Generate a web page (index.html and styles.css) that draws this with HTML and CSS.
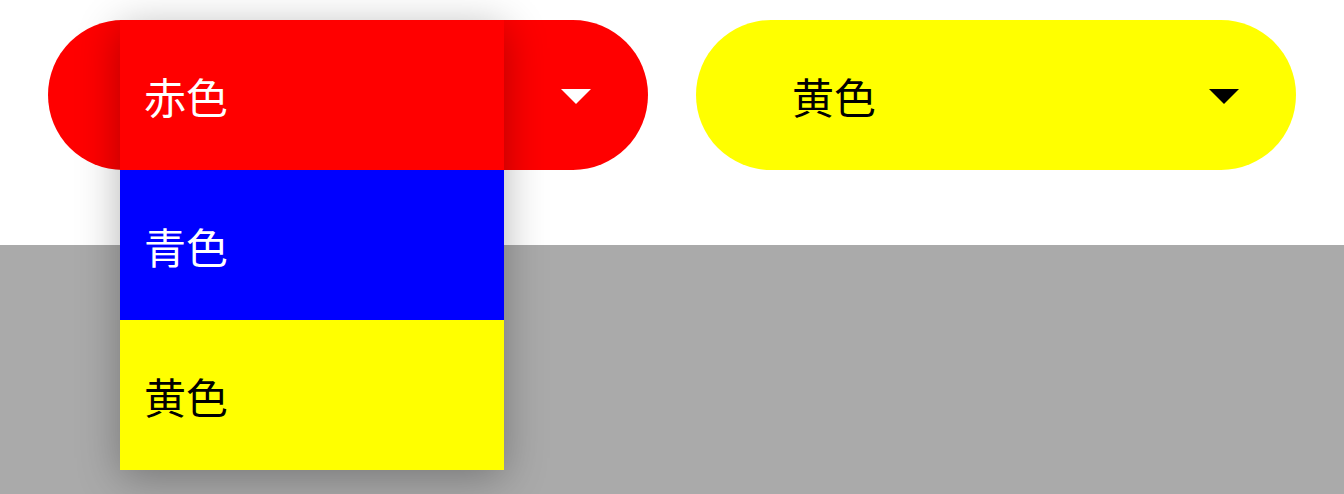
FILE: index.html
```html
<!DOCTYPE html>
<html lang="ja">
<head>
<meta charset="utf-8">
<link rel="stylesheet" href="styles.css">
</head>
<body>
<div class="page">
  <div class="top">
    <div class="row">
      <div class="select red">
        <span class="label">赤色</span>
        <svg class="arrow" width="30" height="15" viewBox="0 0 30 15"><polygon points="0,0 30,0 15,15" fill="#fff"/></svg>
      </div>
      <div class="select yellow">
        <span class="label">黄色</span>
        <svg class="arrow" width="30" height="15" viewBox="0 0 30 15"><polygon points="0,0 30,0 15,15" fill="#000"/></svg>
      </div>
    </div>
  </div>
  <div class="bottom"></div>
  <ul class="menu">
    <li class="item red">赤色</li>
    <li class="item blue">青色</li>
    <li class="item yellow">黄色</li>
  </ul>
</div>
</body>
</html>
```
FILE: styles.css
```css
html, body {
  margin: 0;
  padding: 0;
}
body {
  font-family: "Noto Sans CJK JP", "Noto Sans", sans-serif;
  overflow: hidden;
}
.page {
  position: relative;
  width: 1344px;
  height: 494px;
  display: flex;
  flex-direction: column;
}
.top {
  height: 245px;
  background: #fff;
}
.row {
  display: flex;
  gap: 48px;
  padding: 20px 48px 0;
}
.select {
  width: 600px;
  height: 150px;
  border-radius: 75px;
  display: flex;
  align-items: center;
  justify-content: space-between;
  padding: 0 57px 0 96px;
  box-sizing: border-box;
  font-size: 42px;
}
.label {
  line-height: 1;
  margin-top: 2px;
}
.arrow {
  display: block;
  margin-top: 2px;
}
.bottom {
  flex: 1;
  background: #aaa;
}
.red { background: #f00; color: #fff; }
.yellow { background: #ff0; color: #000; }
.blue { background: #00f; color: #fff; }
.menu {
  position: absolute;
  left: 120px;
  top: 20px;
  width: 384px;
  margin: 0;
  padding: 0;
  list-style: none;
  box-shadow: 0 8px 40px rgba(0, 0, 0, 0.3);
}
.item {
  height: 150px;
  display: flex;
  align-items: center;
  padding-left: 24px;
  padding-top: 1px;
  box-sizing: border-box;
  font-size: 42px;
  line-height: 1;
}
```
